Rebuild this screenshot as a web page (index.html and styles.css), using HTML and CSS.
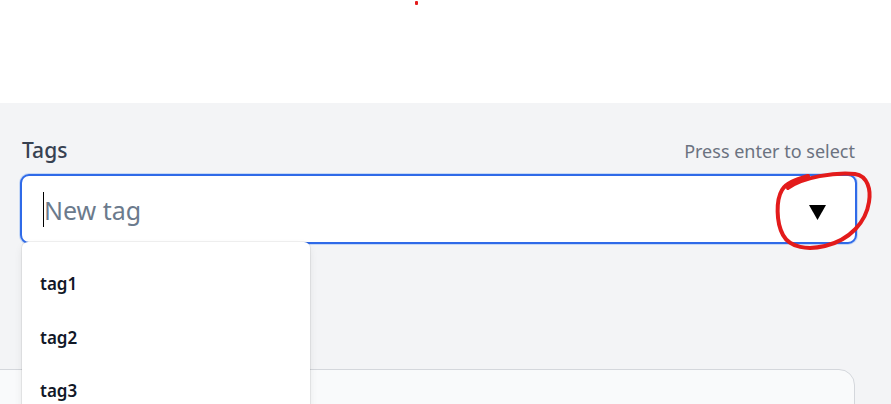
FILE: index.html
```html
<!DOCTYPE html>
<html lang="en">
<head>
<meta charset="utf-8">
<title>Tags</title>
<link rel="stylesheet" href="styles.css">
</head>
<body>
<div class="top"><span class="dot"></span></div>
<main class="main">
  <div class="field">
    <div class="field-head">
      <span class="label">Tags</span>
      <span class="hint">Press enter to select</span>
    </div>
    <div class="combo">
      <div class="input">
        <span class="caret"></span>
        <span class="placeholder">New tag</span>
        <svg class="arrow" width="17" height="15" viewBox="0 0 17 15"><polygon points="0,0 17,0 8.5,15" fill="#000"/></svg>
      </div>
      <ul class="menu">
        <li class="item">tag1</li>
        <li class="item">tag2</li>
        <li class="item">tag3</li>
      </ul>
    </div>
  </div>
  <div class="card"></div>
</main>
<svg class="annot" width="891" height="404" viewBox="0 0 891 404">
  <path d="M 788 188 C 803 177, 835 172, 855 174 C 868 176, 871 190, 869 202 C 866 222, 850 240, 825 246 C 808 250, 790 248, 783 235 C 776 222, 776 200, 782 190 C 786 183, 795 180, 808 176" fill="none" stroke="#e31b1b" stroke-width="4" stroke-linecap="round" stroke-linejoin="round"/>
</svg>
</body>
</html>
```

FILE: styles.css
```css
html, body {
  margin: 0;
  padding: 0;
  height: 100%;
  overflow: hidden;
}
body {
  font-family: "Noto Sans", "Open Sans", sans-serif;
  background: #f3f4f6;
  position: relative;
}
.top {
  height: 103px;
  background: #ffffff;
  box-sizing: border-box;
  padding: 1px 0 0 415px;
}
.dot {
  display: block;
  width: 3px;
  height: 4px;
  background: #e31b1b;
  border-radius: 1px;
}
.main {
  padding: 33px 34px 0 20px;
}
.field-head {
  display: flex;
  justify-content: space-between;
  align-items: baseline;
  padding: 0 2px;
  height: 28px;
  margin-bottom: 10px;
}
.label {
  font-size: 21px;
  font-weight: 500;
  color: #374151;
  line-height: 28px;
}
.hint {
  font-size: 18px;
  color: #6b7280;
  line-height: 28px;
}
.combo {
  position: relative;
}
.input {
  height: 70px;
  box-sizing: border-box;
  border: 2px solid #2f6ae8;
  border-radius: 9px;
  background: #fff;
  display: flex;
  align-items: center;
  padding: 0 29px 0 21px;
  box-shadow: 0 0 0 1px rgba(59, 130, 246, 0.25);
}
.caret {
  width: 1px;
  height: 35px;
  background: #000;
}
.placeholder {
  font-size: 25px;
  color: #6b7a8c;
  flex: 1;
  margin-top: 1px;
}
.arrow {
  display: block;
  margin-top: 6px;
}
.menu {
  position: absolute;
  left: 2px;
  top: 68px;
  width: 288px;
  margin: 0;
  padding: 15px 0 0;
  list-style: none;
  background: #fff;
  border-radius: 6px;
  box-shadow: 0 0 0 1px rgba(0, 0, 0, 0.06), 0 4px 8px rgba(0, 0, 0, 0.08);
  z-index: 2;
}
.item {
  height: 53.5px;
  display: flex;
  align-items: center;
  padding: 0 18px;
  font-size: 17px;
  font-weight: 600;
  color: #111827;
}
.card {
  margin: 125px 2px 0 -40px;
  height: 120px;
  background: #f9fafb;
  border: 1px solid #d4d7dc;
  border-radius: 16px;
}
.annot {
  position: absolute;
  left: 0;
  top: 0;
  pointer-events: none;
  z-index: 5;
}
```
